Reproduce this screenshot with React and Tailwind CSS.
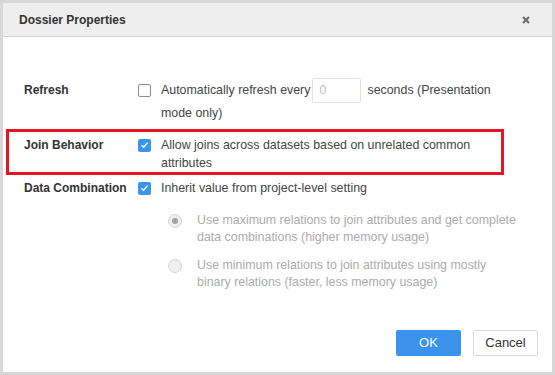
import React from 'react';

// Dossier Properties dialog
function Checkbox({ checked, className }) {
    if (checked) {
        return (
            <span className={`flex-none w-[13px] h-[13px] rounded-[2px] bg-[#3b95ec] flex items-center justify-center ${className}`}>
                <svg width="9" height="8" viewBox="0 0 9 8" fill="none">
                    <path d="M1.5 4.2 L3.6 6.2 L7.6 1.6" stroke="#ffffff" strokeWidth="1.3" />
                </svg>
            </span>
        );
    }
    return <span className={`flex-none w-[13px] h-[13px] rounded-[2px] border border-[#8c8c8c] bg-white ${className}`} />;
}

function Radio({ checked }) {
    return (
        <span className="flex-none mt-[1.5px] w-[14px] h-[14px] rounded-full border border-[#d4d4d4] bg-[#efefef] flex items-center justify-center">
            {checked && <span className="w-[6px] h-[6px] rounded-full bg-[#a3a3a3]" />}
        </span>
    );
}

export default function App() {
    return (
        <div className="w-[555px] h-[375px] bg-[#d7d7d7] p-[3px] font-['Liberation_Sans',Arial,sans-serif] text-[12px]">
            <div className="h-full bg-white flex flex-col">
                {/* Header */}
                <div className="h-[34px] flex-none bg-[#eeeeee] border-b border-[#d3d3d3] flex items-center justify-between pl-[16px] pr-[22px]">
                    <span className="font-bold text-[#333333]">Dossier Properties</span>
                    <svg width="8" height="8" viewBox="0 0 8 8">
                        <path d="M1 1 L7 7 M7 1 L1 7" stroke="#6a6a6a" strokeWidth="2" />
                    </svg>
                </div>

                {/* Body */}
                <div className="flex-1 pl-[21px] pt-[42px]">
                    {/* Refresh */}
                    <div className="flex items-start">
                        <div className="w-[114px] flex-none leading-[23px] font-bold text-[#333333]">Refresh</div>
                        <Checkbox className="mt-[5px]" />
                        <div className="ml-[10px] w-[359px] leading-[23px] text-[12.4px] text-[#444444]">
                            Automatically refresh every
                            <span className="inline-block align-middle -my-[1px] ml-[2px] mr-[6px] w-[49px] h-[25px] border border-[#e2e2e2] rounded-[2px] pl-[6px] leading-[23px] text-[#c2c2c2]">0</span>
                            seconds (Presentation mode only)
                        </div>
                    </div>

                    {/* Join Behavior (highlighted) */}
                    <div className="mt-[4px] -ml-[18px] w-[498px] border-[3px] border-[#e5161f] pl-[15px] pt-[4px]">
                        <div className="flex items-start">
                            <div className="w-[114px] flex-none leading-[18px] font-bold text-[#333333]">Join Behavior</div>
                            <Checkbox checked className="mt-[2.5px]" />
                            <div className="ml-[10px] w-[359px] leading-[18px] text-[12.4px] text-[#444444]">
                                Allow joins across datasets based on unrelated common attributes
                            </div>
                        </div>
                    </div>

                    {/* Data Combination */}
                    <div className="mt-[4px] flex items-start">
                        <div className="w-[114px] flex-none leading-[18px] font-bold text-[#333333]">Data Combination</div>
                        <Checkbox checked className="mt-[2.5px]" />
                        <div className="ml-[10px] w-[359px] leading-[18px] text-[12.4px] text-[#444444]">
                            Inherit value from project-level setting
                        </div>
                    </div>

                    {/* Options */}
                    <div className="pl-[144px] mt-[15px]">
                        <div className="flex items-start">
                            <Radio checked />
                            <div className="ml-[15px] w-[323px] leading-[17px] text-[12.4px] text-[#ababab]">
                                Use maximum relations to join attributes and get complete data combinations (higher memory usage)
                            </div>
                        </div>
                        <div className="flex items-start mt-[11px]">
                            <Radio />
                            <div className="ml-[15px] w-[323px] leading-[17px] text-[12.4px] text-[#ababab]">
                                Use minimum relations to join attributes using mostly binary relations (faster, less memory usage)
                            </div>
                        </div>
                    </div>
                </div>

                {/* Footer */}
                <div className="flex-none flex justify-end gap-[12px] pr-[14px] pb-[16px]">
                    <button className="w-[65px] h-[26px] rounded-[2px] bg-[#3b93ec] text-white text-[13px]">OK</button>
                    <button className="w-[65px] h-[26px] rounded-[2px] bg-white border border-[#d9d9d9] text-[#333333] text-[13px]">Cancel</button>
                </div>
            </div>
        </div>
    );
}
